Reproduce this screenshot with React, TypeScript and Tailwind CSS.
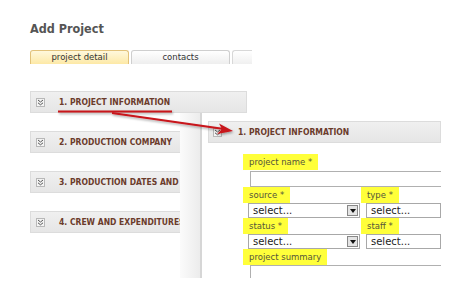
const ChevIcon = () => (
  <span className="flex h-[9px] w-[9px] items-center justify-center border border-[#b8b8b8] bg-[#f4f4f4]">
    <svg width="7" height="7" viewBox="0 0 7 7" fill="none" stroke="#555" strokeWidth="1">
      <path d="M1 1l2.5 2 2.5-2M1 3.8l2.5 2 2.5-2" />
    </svg>
  </span>
);

const SectionBar = ({ title }: { title: string }) => (
  <div className="flex h-[22px] w-[217px] items-center border border-[#dcdcdc] bg-gradient-to-b from-[#f0f0f0] to-[#e6e6e6] pl-[5px]">
    <ChevIcon />
    <span className="ml-[14px] whitespace-nowrap text-[8.5px] font-bold text-[#6b3b2b] [font-family:'DejaVu_Sans_Condensed','DejaVu_Sans',sans-serif]">
      {title}
    </span>
  </div>
);

const Label = ({ text }: { text: string }) => (
  <span className="block w-fit bg-[#ffff3a] px-[6px] py-[2px] text-[8.5px] leading-[12px] text-[#55553a] [font-family:'DejaVu_Sans',sans-serif]">
    {text}
  </span>
);

const Select = ({ arrow }: { arrow?: boolean }) => (
  <div className="flex h-[15px] items-center justify-between border border-[#a8a8a8] bg-white pl-[4px] pr-[1px]">
    <span className="text-[10px] leading-[12px] text-[#222] [font-family:'DejaVu_Sans',sans-serif]">select...</span>
    {arrow && (
      <span className="flex h-[11px] w-[11px] items-center justify-center border border-[#888] bg-[#e4e4e4]">
        <svg width="6" height="4" viewBox="0 0 6 4">
          <path d="M0 0h6L3 4z" fill="#111" />
        </svg>
      </span>
    )}
  </div>
);

export default function App() {
  return (
    <div className="relative h-[295px] w-[474px] overflow-hidden bg-white [font-family:'DejaVu_Sans',sans-serif]">
      <div className="pl-[30px] pt-[21px]">
        <h1 className="text-[12.5px] font-bold leading-[16px] text-[#555] [font-family:'DejaVu_Sans_Condensed','DejaVu_Sans',sans-serif]">
          Add Project
        </h1>
        <div className="mt-[13px] flex gap-[2px]">
          <div className="flex h-[14px] w-[99px] items-center justify-center rounded-t-[3px] border border-b-0 border-[#e2c27a] bg-gradient-to-b from-[#fff8dc] to-[#fde9a6] text-[8.5px] text-[#333]">
            project detail
          </div>
          <div className="flex h-[14px] w-[99px] items-center justify-center rounded-t-[3px] border border-b-0 border-[#cfcfcf] bg-gradient-to-b from-[#ffffff] to-[#eeeeee] text-[8.5px] text-[#333]">
            contacts
          </div>
          <div className="h-[14px] w-[20px] rounded-tl-[3px] border border-b-0 border-r-0 border-[#d8d8d8] bg-gradient-to-b from-[#ffffff] to-[#f0f0f0]" />
        </div>
        <div className="mt-[27px] flex flex-col gap-[18px]">
          <SectionBar title="1. PROJECT INFORMATION" />
          <SectionBar title="2. PRODUCTION COMPANY" />
          <SectionBar title="3. PRODUCTION DATES AND DISTRIBUTION" />
          <SectionBar title="4. CREW AND EXPENDITURES" />
        </div>
      </div>

      {/* zoomed panel */}
      <div className="absolute left-[180px] top-[113px] flex h-[165px] w-[261px] overflow-hidden">
        <div className="w-[20px] bg-gradient-to-r from-[#fbfbfb] to-[#ececec]" />
        <div className="w-[2px] bg-[#d6d6d6]" />
        <div className="flex-1 bg-white pl-[6px] pt-[8px]">
          <div className="flex h-[22px] items-center border border-[#dcdcdc] bg-gradient-to-b from-[#f0f0f0] to-[#e6e6e6] pl-[4px]">
            <ChevIcon />
            <span className="ml-[16px] whitespace-nowrap text-[8.5px] font-bold text-[#6b3b2b] [font-family:'DejaVu_Sans_Condensed','DejaVu_Sans',sans-serif]">
              1. PROJECT INFORMATION
            </span>
          </div>
          <div className="pl-[35px] pt-[11px]">
            <Label text="project name *" />
            <div className="ml-[7px] mt-[1px] h-[16px] border border-r-0 border-[#b0b0b0]" />
            <div className="grid grid-cols-[118px_1fr]">
              <div>
                <Label text="source *" />
                <div className="ml-[5px] mr-[1px]">
                  <Select arrow />
                </div>
              </div>
              <div>
                <Label text="type *" />
                <div className="ml-[5px]">
                  <Select />
                </div>
              </div>
              <div>
                <Label text="status *" />
                <div className="ml-[5px] mr-[1px]">
                  <Select arrow />
                </div>
              </div>
              <div>
                <Label text="staff *" />
                <div className="ml-[5px]">
                  <Select />
                </div>
              </div>
            </div>
            <Label text="project summary" />
            <div className="ml-[7px] h-[20px] border-l border-t border-[#b0b0b0]" />
          </div>
        </div>
      </div>

      {/* red annotation */}
      <svg className="absolute left-0 top-0" width="474" height="295" viewBox="0 0 474 295">
        <defs>
          <filter id="sh" x="-10%" y="-50%" width="120%" height="200%">
            <feDropShadow dx="1" dy="1.5" stdDeviation="1" floodColor="#000" floodOpacity="0.35" />
          </filter>
        </defs>
        <g filter="url(#sh)">
          <path d="M58 111.5H172" stroke="#c8141a" strokeWidth="2" />
          <path d="M112 113L224 129" stroke="#c8141a" strokeWidth="2" />
          <path d="M233 131L219 123.5L222 129L217 134z" fill="#c8141a" />
        </g>
      </svg>
    </div>
  );
}
